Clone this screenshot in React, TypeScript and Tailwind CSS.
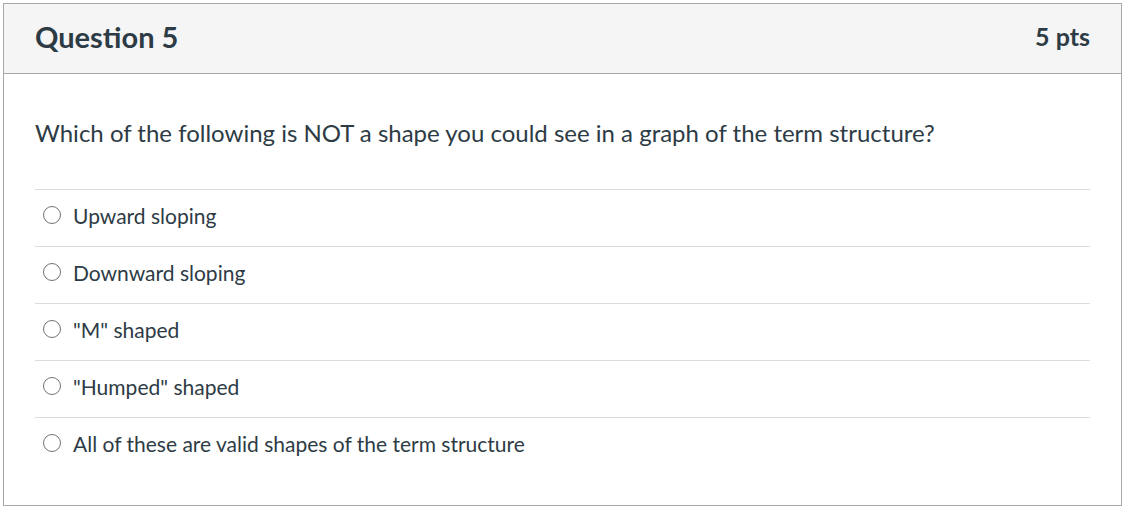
import React from "react";

const ANSWERS = [
  "Upward sloping",
  "Downward sloping",
  "\"M\" shaped",
  "\"Humped\" shaped",
  "All of these are valid shapes of the term structure",
];

export default function App() {
  return (
    <div className="w-[1139px] h-[516px] bg-white pt-[3px] pl-[3px]" style={{ fontFamily: "Lato, 'Noto Sans', sans-serif" }}>
      <div className="w-[1119px] h-[503px] border border-[#a8a8a8] text-[#2d3b45]">
        {/* Header */}
        <div className="h-[70px] bg-[#f5f5f5] border-b border-[#a8a8a8] flex items-center justify-between px-[31px] pb-[4px]">
          <h2 className="text-[29px] font-bold leading-none">Question 5</h2>
          <span className="text-[25px] font-bold leading-none text-[#2d3b45]">5 pts</span>
        </div>

        {/* Body */}
        <div className="px-[31px] pt-[45px]">
          <p className="text-[24px] leading-[28px] mb-[42px]">
            Which of the following is NOT a shape you could see in a graph of the term structure?
          </p>
          <div>
            {ANSWERS.map((a) => (
              <div key={a} className="h-[57px] border-t border-[#dcdcdc] flex items-center pl-[8px] pb-[6px]">
                <span className="w-[18px] h-[18px] rounded-full border border-[#737373] mr-[12px] bg-white" />
                <span className="text-[21px] leading-none">{a}</span>
              </div>
            ))}
          </div>
        </div>
      </div>
    </div>
  );
}
